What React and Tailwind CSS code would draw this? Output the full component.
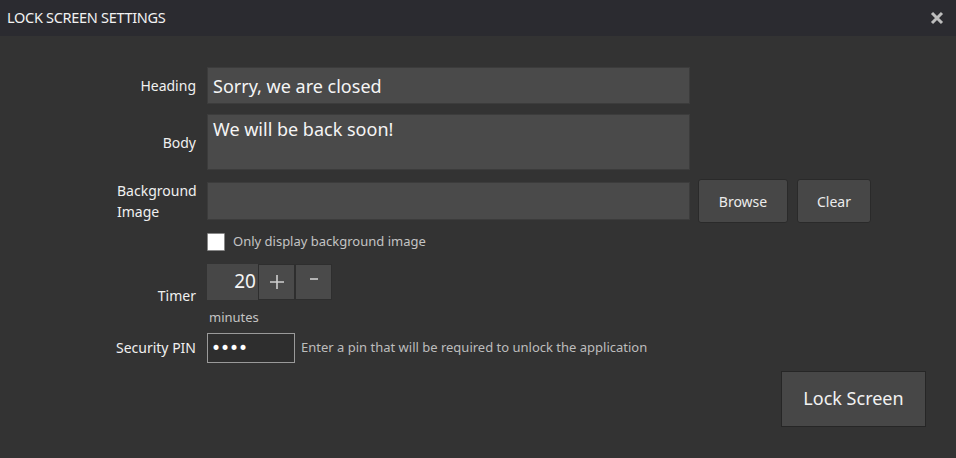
import { useState } from 'react';

// Lock screen settings dialog
export default function App() {
    const [heading, setHeading] = useState('Sorry, we are closed');
    const [body, setBody] = useState('We will be back soon!');
    const [timer, setTimer] = useState(20);
    const [onlyBg, setOnlyBg] = useState(false);

    const font = { fontFamily: '"Noto Sans", "Open Sans", sans-serif' };

    return (
        <div className="w-[956px] h-[458px] bg-[#333333] text-white flex flex-col" style={font}>
            <div className="h-[36px] bg-[#2b2b30] flex items-center justify-between pl-[7px] pr-[12px] shrink-0">
                <span className="text-[14.5px] text-[#f2f2f2] tracking-[-0.3px]">LOCK SCREEN SETTINGS</span>
                <svg width="14" height="14" viewBox="0 0 14 14">
                    <path d="M2 2 L12 12 M12 2 L2 12" stroke="#bdbdbd" strokeWidth="3" />
                </svg>
            </div>

            <div className="flex-1 flex flex-col pt-[31px]">
                <div className="flex items-center">
                    <label className="w-[196px] text-right text-[14px] text-[#f0f0f0]">Heading</label>
                    <input
                        value={heading}
                        onChange={(e) => setHeading(e.target.value)}
                        className="ml-[11px] w-[483px] h-[37px] bg-[#4a4a4a] border border-[#3c3c3c] px-[5px] text-[18px] text-[#f5f5f5] outline-none"
                    />
                </div>

                <div className="flex items-center mt-[10px]">
                    <label className="w-[196px] text-right text-[14px] text-[#f0f0f0]">Body</label>
                    <textarea
                        value={body}
                        onChange={(e) => setBody(e.target.value)}
                        className="ml-[11px] w-[483px] h-[56px] bg-[#4a4a4a] border border-[#3c3c3c] px-[5px] pt-[1px] text-[18px] leading-[26px] text-[#f5f5f5] outline-none resize-none"
                    />
                </div>

                <div className="flex items-center mt-[9px]">
                    <label className="w-[196px] pl-[117px] text-left text-[14px] leading-[21px] text-[#f0f0f0]">Background Image</label>
                    <input className="ml-[11px] w-[483px] h-[38px] bg-[#4a4a4a] border border-[#3c3c3c] outline-none" />
                    <button className="ml-[8px] w-[90px] h-[44px] bg-[#474747] border border-[#2a2a2a] rounded-[3px] text-[14px] text-[#ececec]">Browse</button>
                    <button className="ml-[9px] w-[74px] h-[44px] bg-[#474747] border border-[#2a2a2a] rounded-[3px] text-[14px] text-[#ececec]">Clear</button>
                </div>

                <div className="flex items-center mt-[9px] ml-[207px]">
                    <input
                        type="checkbox"
                        checked={onlyBg}
                        onChange={(e) => setOnlyBg(e.target.checked)}
                        className="appearance-none w-[18px] h-[18px] bg-white border border-[#888] rounded-[1px]"
                    />
                    <span className="ml-[8px] text-[13px] text-[#c4c4c4]">Only display background image</span>
                </div>

                <div className="flex items-end mt-[12px]">
                    <label className="w-[196px] text-right text-[14px] text-[#f0f0f0] leading-[18px] mb-[-5px]">Timer</label>
                    <div className="ml-[11px] flex">
                        <div className="w-[51px] h-[36px] bg-[#474747] flex items-center justify-end pr-[2px] text-[19px] text-[#f5f5f5]">{timer}</div>
                        <button
                            onClick={() => setTimer(timer + 1)}
                            className="w-[37px] h-[36px] bg-[#4a4a4a] border border-[#2e2e2e] flex items-center justify-center text-[#cfcfcf]"
                        >
                            <svg width="16" height="16" viewBox="0 0 16 16">
                                <path d="M8 1 V15 M1 8 H15" stroke="#cfcfcf" strokeWidth="1.6" />
                            </svg>
                        </button>
                        <button
                            onClick={() => setTimer(Math.max(0, timer - 1))}
                            className="w-[37px] h-[36px] bg-[#4a4a4a] border border-[#2e2e2e] flex items-center justify-center text-[#cfcfcf] pb-[6px]"
                        >
                            <svg width="10" height="4" viewBox="0 0 10 4">
                                <path d="M1 2 H9" stroke="#cfcfcf" strokeWidth="1.6" />
                            </svg>
                        </button>
                    </div>
                </div>

                <div className="ml-[209px] mt-[8px] text-[13px] text-[#c4c4c4] leading-[18px]">minutes</div>

                <div className="flex items-center mt-[7px]">
                    <label className="w-[196px] text-right text-[14px] text-[#f0f0f0]">Security PIN</label>
                    <input
                        type="password"
                        defaultValue="1234"
                        className="ml-[11px] w-[88px] h-[30px] bg-[#2e2e2e] border border-[#9a9a9a] px-[3px] text-[17px] tracking-[-1px] text-white outline-none"
                        style={{ fontFamily: '"DejaVu Sans", sans-serif' }}
                    />
                    <span className="ml-[6px] text-[13px] text-[#bdbdbd]">Enter a pin that will be required to unlock the application</span>
                </div>

                <div className="flex justify-end pr-[30px] mt-[8px]">
                    <button className="w-[145px] h-[56px] bg-[#474747] border border-[#262626] text-[18px] text-[#f2f2f2]">Lock Screen</button>
                </div>
            </div>
        </div>
    );
}
